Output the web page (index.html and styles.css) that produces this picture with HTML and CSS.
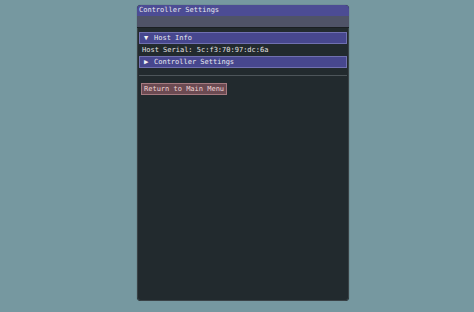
FILE: index.html
```html
<!DOCTYPE html>
<html>
<head>
<meta charset="utf-8">
<link rel="stylesheet" href="styles.css">
</head>
<body>
<div class="window">
  <div class="titlebar">Controller Settings</div>
  <div class="menubar"></div>
  <div class="content">
    <div class="header open"><span class="arrow">▼</span>Host Info</div>
    <div class="line">Host Serial: 5c:f3:70:97:dc:6a</div>
    <div class="header"><span class="arrow">▶</span>Controller Settings</div>
    <div class="separator"></div>
    <div class="button">Return to Main Menu</div>
  </div>
</div>
</body>
</html>
```

FILE: styles.css
```css
html, body {
  margin: 0;
  padding: 0;
}
body {
  background: #7698a0;
  font-family: "DejaVu Sans Mono", "Liberation Mono", monospace;
  font-size: 7px;
  color: #e2e2e2;
  padding: 5px 0 0 137px;
}
.window {
  width: 212px;
  height: 296px;
  box-sizing: border-box;
  border-radius: 4px;
  background: #222a2e;
  overflow: hidden;
  display: flex;
  flex-direction: column;
  box-shadow: 0 0 1px rgba(0,0,0,0.5);
}
.titlebar {
  height: 11px;
  line-height: 11px;
  background: #4c4c94;
  padding-left: 2px;
  color: #e8e8f0;
}
.menubar {
  height: 11px;
  background: #4f5367;
  border-bottom: 1px solid #1a1f22;
}
.content {
  flex: 1;
  padding: 4px 1px 0 1px;
  display: flex;
  flex-direction: column;
  border: 1px solid #3a4246;
  border-top: none;
  border-radius: 0 0 4px 4px;
}
.header {
  height: 10px;
  line-height: 10px;
  background: #47478e;
  border: 1px solid #7070b0;
  padding-left: 4px;
  color: #e8e8f0;
}
.arrow {
  display: inline-block;
  width: 10px;
  font-size: 7px;
  color: #f4f4f4;
}
.line {
  height: 12px;
  line-height: 12px;
  padding-left: 3px;
}
.separator {
  height: 1px;
  background: #4d555a;
  margin: 7px 0 7px 0;
}
.button {
  align-self: flex-start;
  margin-left: 2px;
  height: 10px;
  line-height: 10px;
  padding: 0 2px;
  background: #6c4a52;
  border: 1px solid #a57a80;
  color: #ecd4d4;
}
```
